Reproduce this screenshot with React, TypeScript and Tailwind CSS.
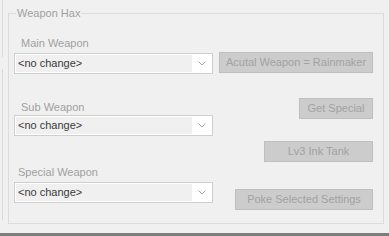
import React from "react";

const font = { fontFamily: '"Liberation Sans", Arial, sans-serif' };

function Combo() {
  return (
    <div className="flex h-[21px] w-[199px] border border-[#cfcfcf] bg-white p-[1px]">
      <div className="flex flex-1 items-center bg-[#f0f0f0] pl-[2px] text-[11px] leading-none text-[#3a3a3a]">
        &lt;no change&gt;
      </div>
      <div className="flex w-[19px] items-center justify-center">
        <svg width="8" height="5" viewBox="0 0 8 5" fill="none">
          <path d="M0.5 0.5 L4 4 L7.5 0.5" stroke="#a8a8a8" strokeWidth="1" />
        </svg>
      </div>
    </div>
  );
}

function Btn({ label, className }: { label: string; className: string }) {
  return (
    <div
      className={`flex h-[21px] items-center justify-center border border-[#bfbfbf] bg-[#cccccc] text-[11px] leading-none text-[#a2a2a2] ${className}`}
    >
      {label}
    </div>
  );
}

export default function App() {
  return (
    <div className="flex h-[236px] w-[389px] flex-col bg-[#f0f0f0]" style={font}>
      <div className="flex h-[233px] flex-row">
        <div className="flex w-[8px] flex-col pl-[2px]">
          <div className="h-[57px] w-px bg-[#dadada]" />
          <div className="mt-[12px] h-[151px] w-px bg-[#dadada]" />
        </div>
        <div className="pt-[6px]">
          <fieldset className="h-[218px] w-[376px] border border-[#dcdcdc]">
            <legend className="ml-[7px] px-[1px] text-[11px] leading-[14px] text-[#a0a0a0]">
              Weapon Hax
            </legend>
            <div className="flex flex-row justify-between pl-[5px] pr-[10px]">
              <div className="flex flex-col">
                <div className="mt-[16px] h-[14px] pl-[7px] text-[11px] leading-[14px] text-[#a0a0a0]">
                  Main Weapon
                </div>
                <div className="mt-[3px]">
                  <Combo />
                </div>
                <div className="mt-[26px] h-[14px] pl-[7px] text-[11px] leading-[14px] text-[#a0a0a0]">
                  Sub Weapon
                </div>
                <div className="mt-[1px]">
                  <Combo />
                </div>
                <div className="mt-[29px] h-[14px] pl-[4px] text-[11px] leading-[14px] text-[#a0a0a0]">
                  Special Weapon
                </div>
                <div className="mt-[3px]">
                  <Combo />
                </div>
              </div>
              <div className="flex flex-col items-end">
                <Btn label="Acutal Weapon = Rainmaker" className="mt-[32px] w-[154px]" />
                <Btn label="Get Special" className="mt-[25px] w-[74px]" />
                <Btn label="Lv3 Ink Tank" className="mt-[22px] w-[109px]" />
                <Btn label="Poke Selected Settings" className="mt-[27px] w-[138px]" />
              </div>
            </div>
          </fieldset>
        </div>
      </div>
      <div className="h-[3px] bg-[#7d7d7d]" />
    </div>
  );
}
